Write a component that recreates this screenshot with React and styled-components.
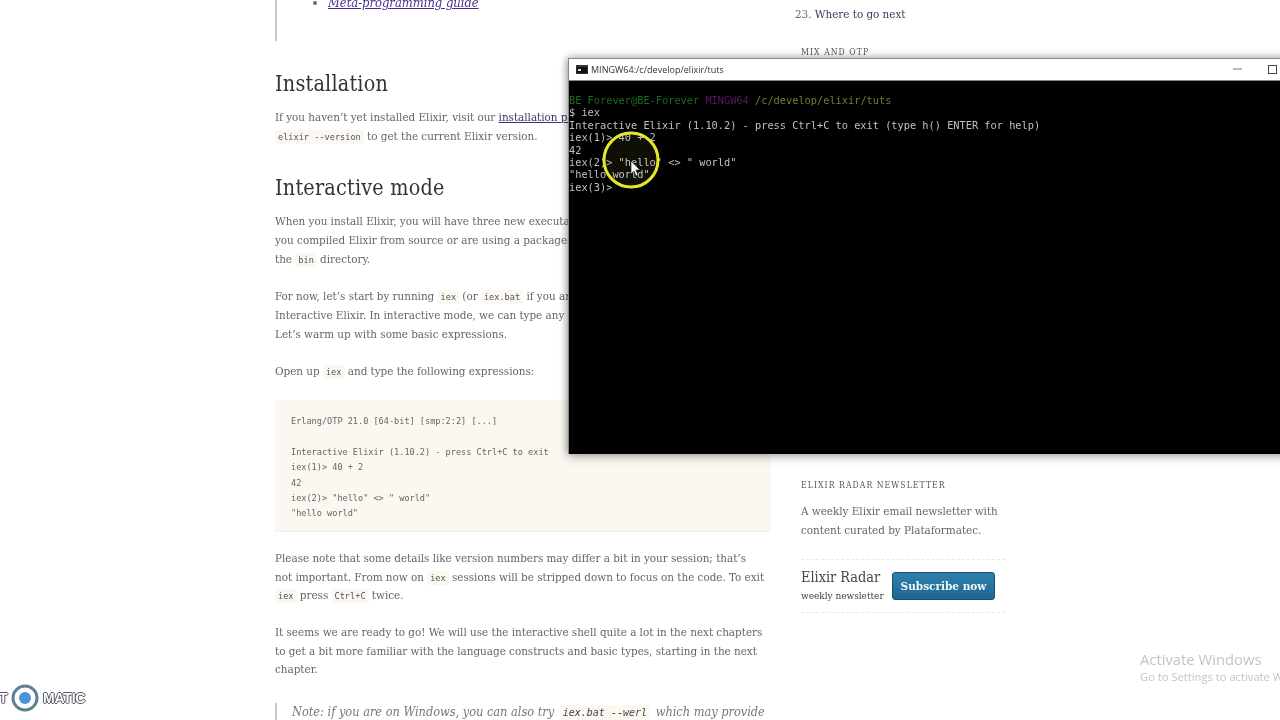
import React from "react";
import styled, { createGlobalStyle } from "styled-components";

const Global = createGlobalStyle`
  html, body { margin: 0; padding: 0; background: #fff; }
  body { font-family: "DejaVu Serif Condensed", "DejaVu Serif", serif; }
`;
const Page = styled.div`
  position: relative; width: 1280px; height: 720px; overflow: hidden; background: #fff;
  display: flex; gap: 30px; padding-left: 275px; box-sizing: border-box; filter: blur(0.35px);
`;
const Main = styled.main`
  width: 496px; flex: none; height: 720px; overflow: hidden; color: #666;
  font-size: 11.6px; line-height: 18.67px; letter-spacing: -0.025px;
`;
const Quote = styled.div`
  border-left: 2px solid #c8c8c8; height: 41px; box-sizing: border-box; padding-left: 31px;
  display: flex; align-items: flex-start;
`;
const GuideItem = styled.div`
  margin-top: -6px; font-style: italic; font-size: 12.9px; display: list-item; list-style: disc; margin-left: 20px;
`;
const GuideLink = styled.a`color: #4a2f8a; text-decoration: underline;`;
const Heading = styled.h2`
  margin: ${p => p.$top}px 0 0; font-weight: 400; font-size: 21.4px; line-height: 28px; color: #333; letter-spacing: 0.2px;
`;
const Para = styled.p`
  margin: ${p => p.$top}px 0 0; white-space: nowrap;
`;
const Link = styled.a`color: #3d3566; text-decoration: underline;`;
const Code = styled.code`
  font-family: "DejaVu Sans Mono", monospace; font-size: 8.6px; line-height: 0; letter-spacing: 0; background: #faf8f0; color: #555;
  padding: 2px 3px; border-radius: 2px;
`;
const NoteCode = styled(Code)`font-size: 10px; color: #444; margin: 0 2px;`;
const Pre = styled.pre`
  margin: 19px 0 0; height: 132px; box-sizing: border-box; padding: 14px 16px 0; background: #fbf8f1; border-bottom: 1px solid #f2efe6;
  font-family: "DejaVu Sans Mono", monospace; font-size: 8.6px; line-height: 15.4px; color: #666; letter-spacing: -0.02px;
`;
const Note = styled.blockquote`
  margin: 24px 0 0; padding-left: 15px; border-left: 2px solid #c8c8c8; font-style: italic; font-size: 12.7px; color: #777;
  white-space: nowrap; height: 40px; font-family: "DejaVu Serif Condensed", serif;
`;
const Side = styled.aside`
  width: 204px; flex: none; color: #666; font-size: 11.6px; line-height: 18.67px; letter-spacing: -0.025px;
`;
const NavItem = styled.div`margin: ${p => p.$top}px 0 0 -6px; white-space: nowrap;`;
const NavLink = styled.a`color: #3d3a5c; text-decoration: none;`;
const SideTitle = styled.h4`
  margin: ${p => p.$top}px 0 0; font-weight: 400; font-size: 8.6px; line-height: 12px; letter-spacing: 1.05px; color: #555; text-transform: uppercase; white-space: nowrap;
`;
const Blurb = styled.p`margin: 11px 0 0; white-space: nowrap;`;
const Promo = styled.div`
  margin-top: 19px; height: 54px; box-sizing: border-box; border-top: 1px dashed #e8e8e8; border-bottom: 1px dashed #e8e8e8;
  display: flex; align-items: center; gap: 7px;
`;
const PromoText = styled.div`display: flex; flex-direction: column; width: 84px; flex: none;`;
const PromoName = styled.span`font-size: 14.4px; line-height: 18px; color: #445; white-space: nowrap;`;
const PromoSub = styled.span`font-size: 10px; line-height: 16px; margin-top: 2px; color: #444; white-space: nowrap;`;
const Subscribe = styled.button`
  width: 103px; height: 28px; padding: 0; border: 1px solid #1d4d6e; border-radius: 3px; color: #f2f7fa;
  background: linear-gradient(#2e81ad, #1f6690); font: 700 11.7px "DejaVu Serif Condensed", serif; letter-spacing: 0; white-space: nowrap;
`;
const Win = styled.section`
  position: absolute; left: 568px; top: 58px; width: 760px; height: 395px; background: #000; border: 1px solid #8a8a8a; border-width: 1px 0 0 1px;
  box-shadow: 0 -2px 8px rgba(0,0,0,.18), 0 4px 10px rgba(0,0,0,.2), -2px 0 6px rgba(0,0,0,.15);
  display: flex; flex-direction: column;
`;
const TitleBar = styled.header`
  height: 22px; box-sizing: border-box; flex: none; background: #fff; display: flex; align-items: center; padding: 0 0 1px 7px; gap: 3px; border-bottom: 1px solid #888; color: #333;
  font: 9px "Open Sans", sans-serif;
`;
const TitleText = styled.span`flex: 1; letter-spacing: 0.02px; white-space: nowrap;`;
const WinButtons = styled.div`display: flex; align-items: center; gap: 25px; width: 96px; flex: none;`;
const Term = styled.pre`
  margin: 0; padding: 13px 0 0 0; font-family: "DejaVu Sans Mono", monospace; font-size: 10.3px; line-height: 12.4px; color: #c0c0c0; flex: 1;
`;
const Green = styled.span`color: #1c6a1c;`;
const Purple = styled.span`color: #5a1a5e;`;
const Olive = styled.span`color: #7a7a30;`;
const Marker = styled.svg`position: absolute; left: 600px; top: 130px;`;
const Activate = styled.div`
  position: absolute; left: 1140px; top: 650px; color: rgba(120,120,120,.45); font: 14.8px/18px "Open Sans", sans-serif; white-space: nowrap;
`;
const ActivateSub = styled.div`font-size: 11.2px; line-height: 17px;`;
const Logo = styled.div`
  position: absolute; left: 0; top: 684px; display: flex; align-items: center; font: 700 14px "Liberation Sans", sans-serif;
  color: #fff; text-shadow: -1px 0 #556, 1px 0 #556, 0 -1px #556, 0 1px #556;
`;
const LogoT = styled.span`width: 12px; margin-left: -1px; text-align: left;`;
const LogoMatic = styled.span`margin-left: 4px; letter-spacing: -0.2px;`;

export default function App() {
  return (
    <>
      <Global />
      <Page>
        <Main>
          <Quote><GuideItem><GuideLink href="#">Meta-programming guide</GuideLink></GuideItem></Quote>
          <Heading $top={29}>Installation</Heading>
          <Para $top={10}>If you haven’t yet installed Elixir, visit our <Link href="#">installation page</Link>. Once you are done, you can run<br /><Code>elixir --version</Code> to get the current Elixir version.</Para>
          <Heading $top={29}>Interactive mode</Heading>
          <Para $top={10}>When you install Elixir, you will have three new executables: iex, elixir and elixirc. If<br />you compiled Elixir from source or are using a packaged version, you can find these<br />the <Code>bin</Code> directory.</Para>
          <Para $top={19}>For now, let’s start by running <Code>iex</Code> (or <Code>iex.bat</Code> if you are on Windows) which stands for<br />Interactive Elixir. In interactive mode, we can type any Elixir expression and get its<br />Let’s warm up with some basic expressions.</Para>
          <Para $top={19}>Open up <Code>iex</Code> and type the following expressions:</Para>
          <Pre>{`Erlang/OTP 21.0 [64-bit] [smp:2:2] [...]

Interactive Elixir (1.10.2) - press Ctrl+C to exit
iex(1)> 40 + 2
42
iex(2)> "hello" <> " world"
"hello world"`}</Pre>
          <Para $top={17}>Please note that some details like version numbers may differ a bit in your session; that’s<br />not important. From now on <Code>iex</Code> sessions will be stripped down to focus on the code. To exit<br /><Code>iex</Code> press <Code>Ctrl+C</Code> twice.</Para>
          <Para $top={18}>It seems we are ready to go! We will use the interactive shell quite a lot in the next chapters<br />to get a bit more familiar with the language constructs and basic types, starting in the next<br />chapter.</Para>
          <Note>Note: if you are on Windows, you can also try <NoteCode>iex.bat --werl</NoteCode> which may provide</Note>
        </Main>
        <Side>
          <NavItem $top={5}>23. <NavLink href="#">Where to go next</NavLink></NavItem>
          <SideTitle $top={22}>Mix and OTP</SideTitle>
          <NavItem $top={381}>3. <NavLink href="#">Domain-specific languages</NavLink></NavItem>
          <SideTitle $top={22}>Elixir Radar newsletter</SideTitle>
          <Blurb>A weekly Elixir email newsletter with<br />content curated by Plataformatec.</Blurb>
          <Promo>
            <PromoText>
              <PromoName>Elixir Radar</PromoName>
              <PromoSub>weekly newsletter</PromoSub>
            </PromoText>
            <Subscribe>Subscribe now</Subscribe>
          </Promo>
        </Side>
        <Win>
          <TitleBar>
            <svg width="12" height="9" viewBox="0 0 12 9"><rect width="12" height="9" fill="#333" /><rect x="1" y="2" width="10" height="6" fill="#111" /><rect x="2" y="4" width="3" height="2" fill="#ddd" /></svg>
            <TitleText>MINGW64:/c/develop/elixir/tuts</TitleText>
            <WinButtons>
              <svg width="10" height="10" viewBox="0 0 10 10"><path d="M0 5h9" stroke="#777" strokeWidth="1" /></svg>
              <svg width="9" height="9" viewBox="0 0 9 9"><rect x=".5" y=".5" width="8" height="8" fill="none" stroke="#444" /></svg>
            </WinButtons>
          </TitleBar>
          <Term><Green>BE Forever@BE-Forever</Green> <Purple>MINGW64</Purple> <Olive>/c/develop/elixir/tuts</Olive>{`
$ iex
Interactive Elixir (1.10.2) - press Ctrl+C to exit (type h() ENTER for help)
iex(1)> 40 + 2
42
iex(2)> "hello" <> " world"
"hello world"
iex(3)>`}</Term>
        </Win>
        <Marker width="70" height="70" viewBox="0 0 70 70">
          <circle cx="31" cy="30" r="27" fill="rgba(255,255,120,.06)" stroke="#e6e62e" strokeWidth="3" />
          <path d="M31 31v13l3-3 2 5 2-1-2-5h4z" fill="#fff" stroke="#222" strokeWidth=".7" />
        </Marker>
        <Logo>
          <LogoT>T</LogoT>
          <svg width="28" height="28" viewBox="0 0 28 28"><circle cx="14" cy="14" r="12" fill="#fff" stroke="#5f7f93" strokeWidth="3" /><circle cx="14" cy="14" r="6" fill="#4d94d6" /></svg>
          <LogoMatic>MATIC</LogoMatic>
        </Logo>
        <Activate>Activate Windows<ActivateSub>Go to Settings to activate Windows.</ActivateSub></Activate>
      </Page>
    </>
  );
}
